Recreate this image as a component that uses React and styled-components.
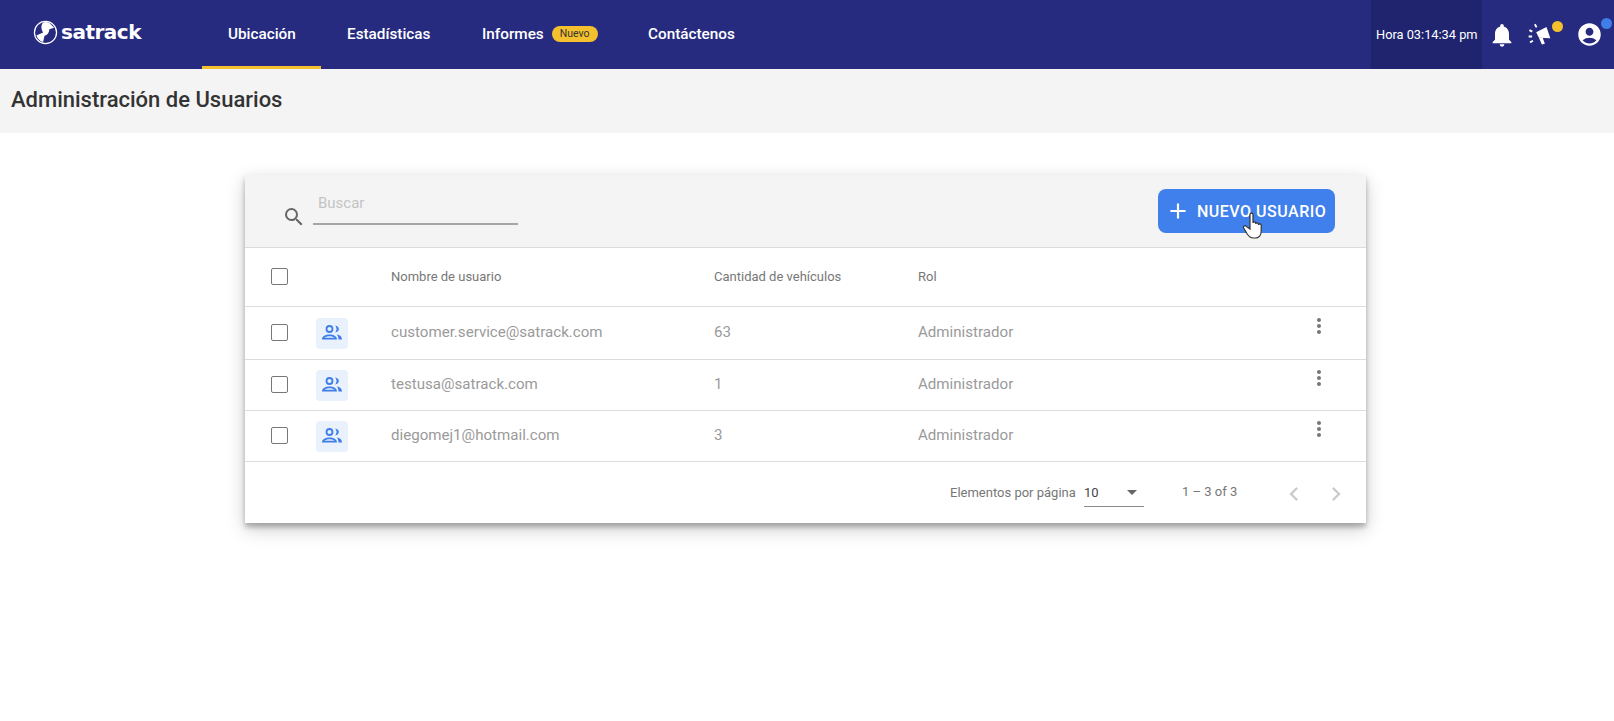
import React from "react";
import styled, { createGlobalStyle } from "styled-components";
import {
  MdNotifications,
  MdAccountCircle,
  MdSearch,
  MdAdd,
  MdMoreVert,
  MdArrowDropDown,
  MdChevronLeft,
  MdChevronRight,
} from "react-icons/md";

const users = [
  { email: "customer.service@satrack.com", vehicles: 63, role: "Administrador", height: 53 },
  { email: "testusa@satrack.com", vehicles: 1, role: "Administrador", height: 51 },
  { email: "diegomej1@hotmail.com", vehicles: 3, role: "Administrador", height: 51 },
];

const navItems = [
  { label: "Ubicación", width: 119, active: true },
  { label: "Estadísticas", width: 135 },
  { label: "Informes", width: 166, badge: "Nuevo" },
  { label: "Contáctenos", width: 110 },
];

function SatrackMark() {
  return (
    <svg width="25" height="25" viewBox="0 0 26 26">
      <circle cx="13" cy="13" r="11.5" fill="none" stroke="#fff" strokeWidth="1.3" />
      <path d="M10 3c3-2 7-1 9 2l3 3-5 1.500c0 3.500-2 6-5 7l-1.500 6.500c-3-1-6-3.500-7-7l7-3c-2-3-2.500-7-.5-10z" fill="#fff" />
    </svg>
  );
}

function Megaphone() {
  return (
    <svg width="26" height="26" viewBox="0 0 24 24" fill="#fff">
      <path d="M8.500 9.500L18 4.500l3.500 10.500-10.500-.5z" />
      <path d="M11 14.500h3.500l2 5.500-2.800.8z" />
      <path d="M1.500 12.500h3.200v1.700H1.500zM2.600 6.700l2.700 1.400-.8 1.500-2.700-1.400zM6.500 2.500l1.500-.8 1.600 2.900-1.500.8zM2.400 18l2.700-1.500.8 1.500-2.700 1.500z" />
    </svg>
  );
}

function HandCursor() {
  return (
    <svg width="24" height="28" viewBox="0 0 24 28">
      <path
        d="M8 2.500c0-1.900 3-1.900 3 0V11c0-1.600 2.800-1.600 2.800 0v1c0-1.500 2.700-1.500 2.700 0v1c0-1.400 2.700-1.400 2.700 0v6c0 4-2.200 7-6 7h-2c-3 0-4.500-1.800-6-4l-3.500-6c-1-1.800 1.300-3.200 2.600-1.600L8 17z"
        fill="#fff"
        stroke="#333"
        strokeWidth="1.200"
      />
    </svg>
  );
}

function PeopleIcon() {
  return (
    <svg width="24" height="24" viewBox="0 0 24 24" fill="#3f7de8">
      <circle cx="9.500" cy="8" r="3" fill="none" stroke="#3f7de8" strokeWidth="1.800" />
      <path d="M15 4.500c2.600.3 3.800 1.800 3.800 3.500s-1.200 3.200-3.800 3.500c1-1 1.500-2.200 1.500-3.500S16 5.500 15 4.500z" />
      <path d="M2 18.500c0-3.200 3.500-5 7.500-5s7.500 1.800 7.500 5zM4.400 16.800h10.200c-.9-1-2.900-1.600-5.100-1.600s-4.200.6-5.100 1.600z" fillRule="evenodd" />
      <path d="M16.800 13.500c3 .4 5.200 1.900 5.200 5h-3.500c0-2-.6-3.600-1.700-5z" />
    </svg>
  );
}

export default function App() {
  return (
    <Page>
      <GlobalStyle />
      <TopBar>
        <Logo>
          <SatrackMark />
          <LogoText>satrack</LogoText>
        </Logo>
        <Nav>
          {navItems.map((item) => (
            <NavItem key={item.label} $active={item.active} $width={item.width}>
              {item.label}
              {item.badge && <Badge>{item.badge}</Badge>}
            </NavItem>
          ))}
        </Nav>
        <TopRight>
          <Clock>Hora 03:14:34 pm</Clock>
          <TopIcon $width={40}>
            <MdNotifications size={28} />
          </TopIcon>
          <TopIcon $width={36}>
            <Megaphone />
            <Dot $color="#f5c02e" $top={21} $right={-5} />
          </TopIcon>
          <TopIcon $width={56} $pad={18}>
            <MdAccountCircle size={27} />
            <Dot $color="#3f7de8" $top={18} $right={2} />
          </TopIcon>
        </TopRight>
      </TopBar>

      <TitleBar>Administración de Usuarios</TitleBar>

      <Card>
        <Toolbar>
          <SearchBox>
            <MdSearch size={24} color="#666" />
            <SearchField>
              <SearchInput placeholder="Buscar" />
            </SearchField>
          </SearchBox>
          <NewButton>
            <MdAdd size={26} />
            NUEVO USUARIO
            <CursorSpot>
              <HandCursor />
            </CursorSpot>
          </NewButton>
        </Toolbar>

        <HeadRow>
          <CheckCell>
            <CheckBox />
          </CheckCell>
          <IconCell />
          <NameCell>Nombre de usuario</NameCell>
          <QtyCell>Cantidad de vehículos</QtyCell>
          <RoleCell>Rol</RoleCell>
        </HeadRow>

        {users.map((user) => (
          <Row key={user.email} $height={user.height}>
            <CheckCell $lift>
              <CheckBox />
            </CheckCell>
            <IconCell>
              <UserBadge>
                <PeopleIcon />
              </UserBadge>
            </IconCell>
            <NameCell $lift>{user.email}</NameCell>
            <QtyCell $lift>{user.vehicles}</QtyCell>
            <RoleCell $lift>{user.role}</RoleCell>
            <MoreCell>
              <MdMoreVert size={24} />
            </MoreCell>
          </Row>
        ))}

        <Footer>
          <PageLabel>Elementos por página</PageLabel>
          <PageSelect>
            10
            <MdArrowDropDown size={24} color="#666" />
          </PageSelect>
          <PageRange>1 – 3 of 3</PageRange>
          <PageArrows>
            <MdChevronLeft size={28} />
            <MdChevronRight size={28} />
          </PageArrows>
        </Footer>
      </Card>
    </Page>
  );
}

const GlobalStyle = createGlobalStyle`
  body {
    margin: 0;
    background: #fff;
    font-family: Roboto, "Liberation Sans", sans-serif;
  }
`;

const Page = styled.div`
  min-height: 100vh;
  overflow: hidden;
`;

const TopBar = styled.header`
  height: 69px;
  background: #272b80;
  color: #fff;
  display: flex;
  align-items: stretch;
`;

const Logo = styled.div`
  width: 202px;
  box-sizing: border-box;
  padding: 0 0 5px 33px;
  display: flex;
  align-items: center;
  gap: 3px;
`;

const LogoText = styled.span`
  font-family: "DejaVu Sans", sans-serif;
  font-size: 20px;
  font-weight: 700;
  letter-spacing: -0.5px;
`;

const Nav = styled.nav`
  display: flex;
  flex: 1;
`;

const NavItem = styled.div`
  width: ${(props) => props.$width}px;
  box-sizing: border-box;
  padding: 2px 0 0 26px;
  display: flex;
  align-items: center;
  font-size: 15.3px;
  font-weight: 500;
  white-space: nowrap;
  border-bottom: 3px solid ${(props) => (props.$active ? "#f5c02e" : "transparent")};
`;

const Badge = styled.span`
  margin-left: 8px;
  padding: 0 8px;
  height: 16px;
  line-height: 16px;
  border-radius: 9px;
  background: #f5c02e;
  color: #333;
  font-size: 10.5px;
  font-weight: 400;
`;

const TopRight = styled.div`
  display: flex;
  align-items: stretch;
`;

const Clock = styled.div`
  width: 111px;
  box-sizing: border-box;
  padding-left: 5px;
  background: #20246f;
  display: flex;
  align-items: center;
  font-size: 12.8px;
  white-space: nowrap;
`;

const TopIcon = styled.div`
  width: ${(props) => props.$width}px;
  box-sizing: border-box;
  padding-left: ${(props) => props.$pad || 0}px;
  display: flex;
  align-items: center;
  justify-content: ${(props) => (props.$pad ? "flex-start" : "center")};
  position: relative;
`;

const Dot = styled.span`
  position: absolute;
  top: ${(props) => props.$top}px;
  right: ${(props) => props.$right}px;
  width: 11px;
  height: 11px;
  border-radius: 50%;
  background: ${(props) => props.$color};
`;

const TitleBar = styled.div`
  height: 64px;
  box-sizing: border-box;
  padding: 0 0 3px 11px;
  background: #f4f4f5;
  display: flex;
  align-items: center;
  font-size: 22px;
  font-weight: 500;
  color: #333;
`;

const Card = styled.section`
  width: 1121px;
  margin: 42px 0 0 245px;
  background: #fff;
  box-shadow: 0 4px 5px rgba(0, 0, 0, 0.26), 0 6px 18px rgba(0, 0, 0, 0.2);
`;

const Toolbar = styled.div`
  height: 73px;
  box-sizing: border-box;
  padding: 14px 31px 0 37px;
  background: #f4f4f4;
  border-bottom: 1px solid #dcdcdc;
  display: flex;
  justify-content: space-between;
  align-items: flex-start;
`;

const SearchBox = styled.div`
  display: flex;
  align-items: flex-end;
  gap: 7px;
  height: 40px;
`;

const SearchField = styled.div`
  width: 205px;
  height: 34px;
  margin-bottom: 4px;
  border-bottom: 2px solid #a6a6a6;
`;

const SearchInput = styled.input`
  width: 100%;
  height: 28px;
  padding: 0 0 0 5px;
  box-sizing: border-box;
  border: 0;
  outline: 0;
  background: transparent;
  font-family: inherit;
  font-size: 15px;

  &::placeholder {
    color: #c4c4c4;
  }
`;

const NewButton = styled.button`
  position: relative;
  width: 177px;
  height: 44px;
  padding: 0 0 0 7px;
  border: 0;
  border-radius: 8px;
  background: #4080ec;
  color: #fff;
  display: flex;
  align-items: center;
  gap: 6px;
  font-family: inherit;
  font-size: 16px;
  font-weight: 500;
  letter-spacing: 0.5px;
  white-space: nowrap;
`;

const CursorSpot = styled.span`
  position: absolute;
  left: 84px;
  top: 23px;
`;

const HeadRow = styled.div`
  height: 59px;
  box-sizing: border-box;
  padding-bottom: 1px;
  border-bottom: 1px solid #dcdcdc;
  display: flex;
  align-items: center;
  font-size: 13px;
  color: #777;
`;

const Row = styled.div`
  height: ${(props) => props.$height}px;
  box-sizing: border-box;
  border-bottom: 1px solid #dcdcdc;
  display: flex;
  align-items: center;
  font-size: 15.1px;
  color: #9a9a9a;
`;

const CheckCell = styled.div`
  width: 71px;
  padding: 0 0 ${(props) => (props.$lift ? 2 : 0)}px 26px;
  box-sizing: border-box;
`;

const CheckBox = styled.div`
  width: 15px;
  height: 15px;
  border: 1.6px solid #777;
  border-radius: 2px;
`;

const IconCell = styled.div`
  width: 75px;
`;

const UserBadge = styled.div`
  width: 32px;
  height: 31px;
  border-radius: 4px;
  background: #e8f1fc;
  display: flex;
  align-items: center;
  justify-content: center;
`;

const NameCell = styled.div`
  width: 323px;
  padding-bottom: ${(props) => (props.$lift ? 2 : 0)}px;
`;

const QtyCell = styled.div`
  width: 204px;
  padding-bottom: ${(props) => (props.$lift ? 2 : 0)}px;
`;

const RoleCell = styled.div`
  width: 389px;
  padding-bottom: ${(props) => (props.$lift ? 2 : 0)}px;
`;

const MoreCell = styled.div`
  color: #777;
  display: flex;
  margin-top: -14px;
`;

const Footer = styled.div`
  height: 61px;
  padding-left: 705px;
  display: flex;
  align-items: center;
  font-size: 13px;
  color: #777;
`;

const PageLabel = styled.span`
  width: 134px;
`;

const PageSelect = styled.div`
  width: 60px;
  height: 29px;
  box-sizing: border-box;
  border-bottom: 1px solid #8a8a8a;
  display: flex;
  align-items: center;
  justify-content: space-between;
  color: #444;
  font-size: 13px;
`;

const PageRange = styled.span`
  margin: 0 0 2px 38px;
  width: 98px;
`;

const PageArrows = styled.div`
  display: flex;
  gap: 14px;
  color: #ccc;
  margin-top: 2px;
`;
